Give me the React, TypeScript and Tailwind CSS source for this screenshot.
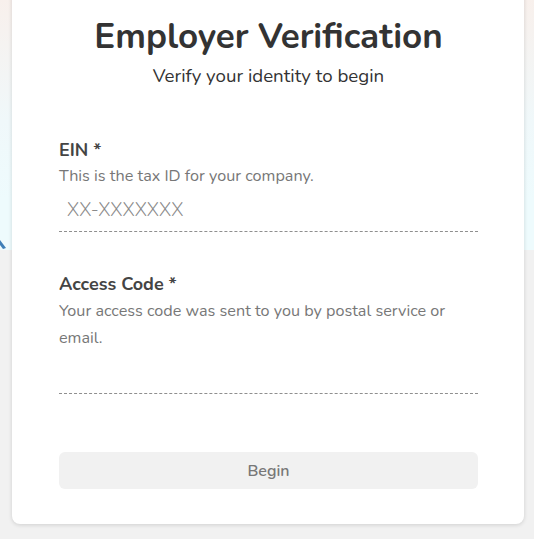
export default function App() {
  return (
    <div
      className="relative min-h-[539px] overflow-hidden pl-3 pr-[10px] pb-4 bg-[linear-gradient(to_bottom,#f8f0ec_0px,#f0f8fa_120px,#eefbfd_200px,#eefbfd_250px,#f1f1f1_250px)]"
      style={{ fontFamily: 'Nunito, Lato, "Open Sans", sans-serif' }}
    >
      <svg className="absolute left-0 top-[238px] w-[8px] h-[12px]" viewBox="0 0 8 12">
        <path d="M0 2 L6 10 L3 11 L0 7 Z" fill="#3f7fb8" />
      </svg>

      <div className="relative -mt-4 rounded-lg bg-white pl-[47px] pr-[46px] pt-[34px] pb-[35px] shadow-[0_1px_4px_rgba(0,0,0,0.14)]">
        <h1 className="-mt-[2px] text-center text-[35px] leading-[41px] font-bold text-[#333]">
          Employer Verification
        </h1>
        <p className="mt-[7px] text-center text-[18.7px] leading-6 text-[#333]">
          Verify your identity to begin
        </p>

        <div className="mt-[50px]">
          <label className="block text-[18px] leading-6 font-bold text-[#444]">EIN *</label>
          <p className="mt-[2px] text-[16.2px] leading-6 text-[#777]">
            This is the tax ID for your company.
          </p>
          <input
            placeholder="XX-XXXXXXX"
            className="mt-[1px] block h-[43px] w-full border-b border-dashed border-[#8f8f8f] px-2 text-[19px] text-[#333] outline-none placeholder:text-[#8a8a8a] placeholder:font-light"
          />
        </div>

        <div className="mt-[40px]">
          <label className="block text-[18px] leading-6 font-bold text-[#444]">Access Code *</label>
          <p className="mt-[2px] text-[16.2px] leading-[27px] text-[#777]">
            Your access code was sent to you by postal service or email.
          </p>
          <input className="block h-[42px] w-full border-b border-dashed border-[#8f8f8f] px-2 text-[19px] text-[#333] outline-none" />
        </div>

        <button className="mt-[58px] flex h-[37px] w-full items-center justify-center rounded-md bg-[#f1f1f1] text-[16px] font-semibold text-[#777]">
          Begin
        </button>
      </div>
    </div>
  )
}
